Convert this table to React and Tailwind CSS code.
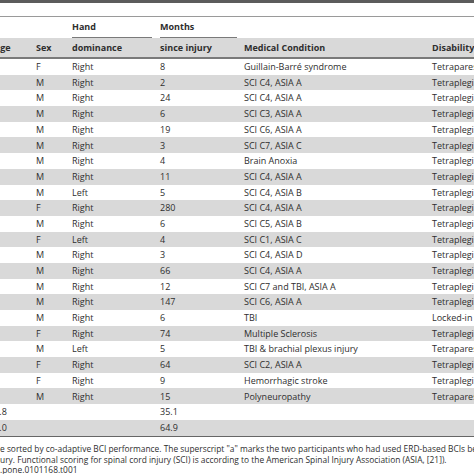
import React from "react";

const rows = [
  ["F", "Right", "8", "Guillain-Barré syndrome", "Tetraparesis"],
  ["M", "Right", "2", "SCI C4, ASIA A", "Tetraplegia"],
  ["M", "Right", "24", "SCI C4, ASIA A", "Tetraplegia"],
  ["M", "Right", "6", "SCI C3, ASIA A", "Tetraplegia"],
  ["M", "Right", "19", "SCI C6, ASIA A", "Tetraplegia"],
  ["M", "Right", "3", "SCI C7, ASIA C", "Tetraplegia"],
  ["M", "Right", "4", "Brain Anoxia", "Tetraplegia"],
  ["M", "Right", "11", "SCI C4, ASIA A", "Tetraplegia"],
  ["M", "Left", "5", "SCI C4, ASIA B", "Tetraplegia"],
  ["F", "Right", "280", "SCI C4, ASIA A", "Tetraplegia"],
  ["M", "Right", "6", "SCI C5, ASIA B", "Tetraplegia"],
  ["F", "Left", "4", "SCI C1, ASIA C", "Tetraplegia"],
  ["M", "Right", "3", "SCI C4, ASIA D", "Tetraplegia"],
  ["M", "Right", "66", "SCI C4, ASIA A", "Tetraplegia"],
  ["M", "Right", "12", "SCI C7 and TBI, ASIA A", "Tetraplegia"],
  ["M", "Right", "147", "SCI C6, ASIA A", "Tetraplegia"],
  ["M", "Right", "6", "TBI", "Locked-in"],
  ["F", "Right", "74", "Multiple Sclerosis", "Tetraplegia"],
  ["M", "Left", "5", "TBI & brachial plexus injury", "Tetraparesis"],
  ["F", "Right", "64", "SCI C2, ASIA A", "Tetraplegia"],
  ["F", "Right", "9", "Hemorrhagic stroke", "Tetraplegia"],
  ["M", "Right", "15", "Polyneuropathy", "Tetraparesis"],
];

const summary = [
  ["41.8", "35.1"],
  ["15.0", "64.9"],
];

const cols = "grid grid-cols-[52px_36px_88px_84px_188px_120px]";

export default function App() {
  return (
    <div
      className="w-[474px] h-[474px] overflow-hidden bg-white text-[#2e2e2e] text-[9px]"
      style={{ fontFamily: '"Open Sans", "Noto Sans", sans-serif' }}
    >
      <div className="h-[3px] bg-[#5c5c5c]" />
      <div className="w-[568px] -ml-[16px]">
        {/* header */}
        <div className="mt-[13px] border-t border-[#9a9a9a]" />
        <div className={`${cols} h-[21px] font-bold`}>
          <div />
          <div />
          <div className="mr-[8px] border-b-[1.5px] border-[#7a7a7a] flex items-center">Hand</div>
          <div className="mr-[7px] border-b-[1.5px] border-[#7a7a7a] flex items-center">Months</div>
          <div />
          <div />
        </div>
        <div className={`${cols} h-[19px] bg-[#d9d9d9] font-bold items-center`}>
          <div className="pl-[10px]">Age</div>
          <div>Sex</div>
          <div>dominance</div>
          <div>since injury</div>
          <div>Medical Condition</div>
          <div>Disability</div>
        </div>
        <div className="h-[2px] bg-[#7a7a7a]" />

        {/* body */}
        {rows.map((r, i) => (
          <div
            key={i}
            className={`${cols} h-[15.7px] items-center ${i % 2 ? "bg-[#d9d9d9]" : "bg-white"}`}
          >
            <div />
            <div>{r[0]}</div>
            <div>{r[1]}</div>
            <div>{r[2]}</div>
            <div className="whitespace-nowrap">{r[3]}</div>
            <div className="whitespace-nowrap">{r[4]}</div>
          </div>
        ))}
        {summary.map((s, i) => (
          <div
            key={"s" + i}
            className={`${cols} h-[15.7px] items-center ${i % 2 ? "bg-[#d9d9d9]" : "bg-white"}`}
          >
            <div className="pl-[5px]">{s[0]}</div>
            <div />
            <div />
            <div>{s[1]}</div>
            <div />
            <div />
          </div>
        ))}
        <div className="h-[1.5px] bg-[#666]" />
      </div>

      {/* caption */}
      <div className="mt-[7px] text-[8.4px] leading-[10.5px] whitespace-nowrap">
        <div>e sorted by co-adaptive BCI performance. The superscript "a" marks the two participants who had used ERD-based BCIs before</div>
        <div>ury. Functional scoring for spinal cord injury (SCI) is according to the American Spinal Injury Association (ASIA, [21]).</div>
        <div>.pone.0101168.t001</div>
      </div>
    </div>
  );
}
